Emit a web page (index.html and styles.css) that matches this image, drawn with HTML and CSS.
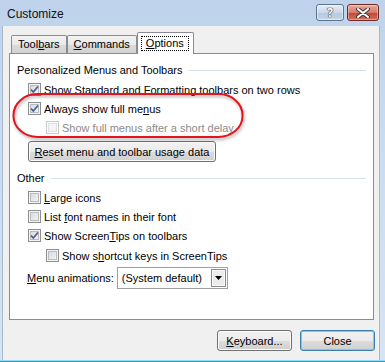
FILE: index.html
```html
<!DOCTYPE html>
<html lang="en">
<head>
    <meta charset="UTF-8">
    <title>Customize</title>
    <link rel="stylesheet" href="styles.css">
</head>
<body>
    <div class="window">
        <div class="titlebar">
            <span class="title">Customize</span>
            <div class="caption-buttons">
                <span class="caption-btn help">?</span>
                <span class="caption-btn close">
                    <svg width="14" height="10" viewBox="0 0 14 10">
                        <path d="M2 1 L12 9 M12 1 L2 9" stroke="#3b3b3b" stroke-width="4" stroke-linecap="round"/>
                        <path d="M2 1 L12 9 M12 1 L2 9" stroke="#fff" stroke-width="2" stroke-linecap="round"/>
                    </svg>
                </span>
            </div>
        </div>
        <div class="frame-body">
            <div class="client">
                <div class="tabs">
                    <div class="tab">Tool<u>b</u>ars</div>
                    <div class="tab"><u>C</u>ommands</div>
                    <div class="tab active"><span class="focus"><u>O</u>ptions</span></div>
                </div>
                <div class="panel">
                    <div class="group-label"><span>Personalized Menus and Toolbars</span></div>
                    <div class="check first">
                        <span class="box"><svg width="9" height="9" viewBox="0 0 9 9"><path d="M1 4.5 L3.3 7 L8 1.5" fill="none" stroke="#4a5e8c" stroke-width="1.7"/></svg></span>
                        <span>Show Standard and Formatting toolbars on two rows</span>
                    </div>
                    <div class="check">
                        <span class="box"><svg width="9" height="9" viewBox="0 0 9 9"><path d="M1 4.5 L3.3 7 L8 1.5" fill="none" stroke="#4a5e8c" stroke-width="1.7"/></svg></span>
                        <span>Always show full me<u>n</u>us</span>
                    </div>
                    <div class="check sub disabled">
                        <span class="box"></span>
                        <span>Show full menus after a short delay</span>
                    </div>
                    <button class="btn reset"><u>R</u>eset menu and toolbar usage data</button>

                    <div class="group-label other"><span>Other</span></div>
                    <div class="check first">
                        <span class="box"></span>
                        <span><u>L</u>arge icons</span>
                    </div>
                    <div class="check">
                        <span class="box"></span>
                        <span>List <u>f</u>ont names in their font</span>
                    </div>
                    <div class="check">
                        <span class="box"><svg width="9" height="9" viewBox="0 0 9 9"><path d="M1 4.5 L3.3 7 L8 1.5" fill="none" stroke="#4a5e8c" stroke-width="1.7"/></svg></span>
                        <span>Show Screen<u>T</u>ips on toolbars</span>
                    </div>
                    <div class="check sub shortcut">
                        <span class="box"></span>
                        <span>Show s<u>h</u>ortcut keys in ScreenTips</span>
                    </div>
                    <div class="field">
                        <span class="field-label"><u>M</u>enu animations:</span>
                        <div class="select">
                            <span class="select-value">(System default)</span>
                            <span class="select-arrow">
                                <svg width="7" height="4" viewBox="0 0 7 4"><path d="M0 0 H7 L3.5 4 Z" fill="#000"/></svg>
                            </span>
                        </div>
                    </div>
                </div>
                <div class="footer">
                    <button class="btn"><u>K</u>eyboard...</button>
                    <button class="btn default">Close</button>
                </div>
            </div>
        </div>
        <svg class="annotation" width="385" height="362" viewBox="0 0 385 362">
            <rect x="13.5" y="94" width="229" height="43" rx="24" ry="21" fill="none" stroke="#e3141c" stroke-width="2"/>
        </svg>
    </div>
</body>
</html>
```

FILE: styles.css
```css
body {
    margin: 0;
    font-family: 'Liberation Sans', Arial, sans-serif;
    font-size: 11px;
    color: #000;
}
.window {
    position: relative;
    width: 385px;
    height: 362px;
    box-sizing: border-box;
    display: flex;
    flex-direction: column;
    background: linear-gradient(#bed3eb, #cadcf0 40%, #d6e4f3);
    box-shadow: inset 0 -1px #3a9cc0, inset 0 -2px #8fdcf3;
}
.titlebar {
    height: 26px;
    display: flex;
    justify-content: space-between;
    padding: 0 6px 0 7px;
}
.title {
    font-size: 12px;
    line-height: 28px;
    color: #111;
}
.caption-buttons {
    display: flex;
    gap: 3px;
    margin-top: 4px;
}
.caption-btn {
    height: 17px;
    box-sizing: border-box;
    border: 1px solid #5f728c;
    border-radius: 3px;
    display: flex;
    align-items: center;
    justify-content: center;
}
.help {
    width: 28px;
    background: linear-gradient(#e4edf7, #c9d8ea 50%, #b4c8df 51%, #c3d6ea);
    color: #fff;
    font-family: 'Noto Sans', sans-serif;
    font-weight: bold;
    font-size: 12px;
    text-shadow: 0 0 1px #333, 0 0 1px #333, 0 0 1px #333;
    box-shadow: inset 0 0 0 1px rgba(255, 255, 255, 0.5);
}
.close {
    width: 32px;
    border-color: #6d2b25;
    background: linear-gradient(#e9a99c, #d9796b 50%, #c44534 51%, #d2705e);
    box-shadow: inset 0 0 0 1px rgba(255, 255, 255, 0.35);
}
.frame-body {
    flex: 1;
    display: flex;
    padding: 0 6px 2px 3px;
}
.client {
    flex: 1;
    display: flex;
    flex-direction: column;
    background: #f0f0f0;
    padding: 6px 5px 0 6px;
    box-shadow: -1px 0 #a7b8cc, 1px 0 #a7b8cc;
}
.tabs {
    display: flex;
    align-items: flex-end;
    margin-left: 2px;
    position: relative;
    z-index: 1;
}
.tab {
    height: 18px;
    box-sizing: border-box;
    padding: 0 6px;
    border: 1px solid #898c95;
    border-bottom: none;
    border-radius: 2px 2px 0 0;
    background: linear-gradient(#f3f3f3, #e9e9e9 50%, #dadada 51%, #d3d3d3);
    line-height: 17px;
}
.tab.active {
    height: 22px;
    margin-bottom: -1px;
    padding: 0 4px 0 3px;
    background: #fff;
    line-height: 19px;
}
.focus {
    display: inline-block;
    margin-top: 3px;
    padding: 0 4px;
    border: 1px dotted #000;
    line-height: 13px;
}
.panel {
    height: 267px;
    box-sizing: border-box;
    border: 1px solid #898c95;
    background: #fff;
    padding: 0 7px;
}
.group-label {
    display: flex;
    align-items: center;
    height: 16px;
    margin-top: 8px;
}
.group-label::after {
    content: '';
    flex: 1;
    height: 1px;
    background: #d5dfe5;
    margin: 1px 0 0 6px;
}
.check {
    display: flex;
    align-items: center;
    gap: 3px;
    height: 19px;
    margin-left: 11px;
}
.check.first {
    margin-top: 2px;
}
.check.sub {
    margin-left: 29px;
}
.check.shortcut {
    margin-top: 1px;
}
.box {
    width: 13px;
    height: 13px;
    box-sizing: border-box;
    border: 1px solid #8e8f8f;
    background: linear-gradient(135deg, #d2d5da, #f7f7f7);
    box-shadow: inset 0 0 0 1px #f4f4f4, inset 0 0 0 2px #b9bdc2;
    display: flex;
    align-items: center;
    justify-content: center;
    flex-shrink: 0;
}
.check.disabled {
    color: #8b8b8b;
}
.check.disabled .box {
    border-color: #c9c9c9;
    background: #f4f4f4;
    box-shadow: inset 0 0 0 1px #fff, inset 0 0 0 2px #e1e1e1;
}
.btn {
    height: 21px;
    box-sizing: border-box;
    border: 1px solid #707070;
    border-radius: 3px;
    background: linear-gradient(#f2f2f2, #ebebeb 50%, #dddddd 51%, #cfcfcf);
    box-shadow: inset 0 0 0 1px #fbfbfb;
    font: inherit;
    color: #000;
    padding: 0;
}
.reset {
    display: block;
    width: 188px;
    margin: 4px 0 0 11px;
}
.field {
    display: flex;
    align-items: center;
    gap: 3px;
    margin: 2px 0 0 10px;
}
.field-label {
    white-space: nowrap;
}
.select {
    width: 111px;
    height: 22px;
    box-sizing: border-box;
    border: 1px solid #a0a0a0;
    background: #fff;
    display: flex;
    align-items: center;
    justify-content: space-between;
    padding: 1px;
}
.select-value {
    padding-left: 3px;
}
.select-arrow {
    width: 15px;
    height: 18px;
    box-sizing: border-box;
    border: 1px solid #8b8b8b;
    background: #ececec;
    box-shadow: inset 0 0 0 1px #fafafa;
    display: flex;
    align-items: center;
    justify-content: center;
}
.footer {
    display: flex;
    justify-content: flex-end;
    gap: 8px;
    margin-top: 10px;
    margin-right: -1px;
}
.footer .btn {
    width: 75px;
}
.btn.default {
    border-color: #3c7fb1;
    box-shadow: inset 0 0 0 1px #5ed6f9;
}
.annotation {
    position: absolute;
    top: 0;
    left: 0;
    pointer-events: none;
    filter: drop-shadow(1px 2px 1.5px rgba(0, 0, 0, 0.35));
}
```
